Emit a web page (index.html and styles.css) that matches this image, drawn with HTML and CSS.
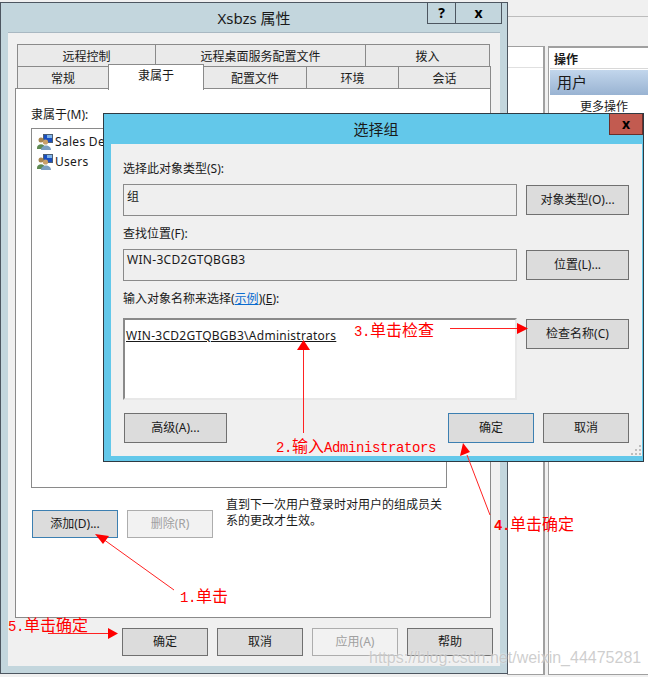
FILE: index.html
```html
<!DOCTYPE html>
<html lang="zh-CN">
<head>
    <meta charset="UTF-8">
    <title>选择组</title>
    <link rel="stylesheet" href="styles.css">
</head>
<body>
    <div class="desktop">
        <!-- 后面的管理控制台 -->
        <div class="mmc">
            <div class="mmc-top"></div>
            <div class="mmc-panes">
                <div class="pane-mid"><div class="pane-mid-head"></div></div>
                <div class="pane-actions">
                    <div class="actions-head">操作</div>
                    <div class="actions-band">用户</div>
                    <div class="actions-item">更多操作</div>
                </div>
            </div>
        </div>

        <!-- 属性窗口 -->
        <div class="window win-props">
            <div class="titlebar props-title">
                <span>Xsbzs 属性</span>
                <div class="props-btns">
                    <div class="cap-btn cap-help">?</div>
                    <div class="cap-btn cap-close">x</div>
                </div>
            </div>
            <div class="client props-client">
                <div class="tabs">
                    <div class="tab-row">
                        <div class="tab w138">远程控制</div>
                        <div class="tab w210">远程桌面服务配置文件</div>
                        <div class="tab w125">拨入</div>
                    </div>
                    <div class="tab-row">
                        <div class="tab w91">常规</div>
                        <div class="tab tab-active w95">隶属于</div>
                        <div class="tab w103">配置文件</div>
                        <div class="tab w92">环境</div>
                        <div class="tab w92">会话</div>
                    </div>
                </div>
                <div class="tab-panel">
                    <div class="panel-label">隶属于(M):</div>
                    <div class="member-list">
                        <div class="member">
                            <svg class="group-icon" viewBox="0 0 16 16"><use href="#group"/></svg>
                            <span>Sales Department</span>
                        </div>
                        <div class="member">
                            <svg class="group-icon" viewBox="0 0 16 16"><use href="#group"/></svg>
                            <span>Users</span>
                        </div>
                    </div>
                    <div class="member-actions">
                        <button class="btn btn-focus w86">添加(D)...</button>
                        <button class="btn btn-off w86">删除(R)</button>
                        <p class="member-note">直到下一次用户登录时对用户的组成员关系的更改才生效。</p>
                    </div>
                </div>
                <div class="props-footer">
                    <button class="btn w86">确定</button>
                    <button class="btn w86">取消</button>
                    <button class="btn btn-off w86">应用(A)</button>
                    <button class="btn w86">帮助</button>
                </div>
            </div>
        </div>

        <!-- 选择组对话框 -->
        <div class="window win-select">
            <div class="titlebar select-title">
                <span>选择组</span>
                <div class="cap-btn select-close">x</div>
            </div>
            <div class="client select-client">
                <div class="field-label">选择此对象类型(S):</div>
                <div class="field-row">
                    <div class="field field-cjk">组</div>
                    <button class="btn w103">对象类型(O)...</button>
                </div>
                <div class="field-label">查找位置(F):</div>
                <div class="field-row">
                    <div class="field">WIN-3CD2GTQBGB3</div>
                    <button class="btn w103">位置(L)...</button>
                </div>
                <div class="field-label field-label-names">输入对象名称来选择(<a href="#">示例</a>)(<u>E</u>):</div>
                <div class="field-row names-row">
                    <div class="names-box"><u>WIN-3CD2GTQBGB3\Administrators</u></div>
                    <button class="btn w103">检查名称(C)</button>
                </div>
                <div class="select-footer">
                    <button class="btn w103">高级(A)...</button>
                    <div class="select-footer-right">
                        <button class="btn btn-focus w86">确定</button>
                        <button class="btn w86">取消</button>
                    </div>
                </div>
                <svg class="grip" viewBox="0 0 10 10">
                    <rect x="8" y="0" width="2" height="2"/><rect x="4" y="4" width="2" height="2"/>
                    <rect x="8" y="4" width="2" height="2"/><rect x="0" y="8" width="2" height="2"/>
                    <rect x="4" y="8" width="2" height="2"/><rect x="8" y="8" width="2" height="2"/>
                </svg>
            </div>
        </div>

        <!-- 红色标注 -->
        <svg class="arrows" viewBox="0 0 648 677">
            <g stroke="#f22" stroke-width="1" fill="none">
                <path d="M174 590 L103 539"/>
                <path d="M303.5 433 L303.5 350"/>
                <path d="M450 328.5 L518 328.5"/>
                <path d="M490 515 L467 455"/>
                <path d="M48 633.5 L108 633.5"/>
            </g>
            <g fill="#f00">
                <polygon points="95,534 109,536 103,544"/>
                <polygon points="303.5,340 297,350 310,350"/>
                <polygon points="528,328.5 517,323 517,334"/>
                <polygon points="463,443 460,456 470,452"/>
                <polygon points="118,633.5 108,628 108,639"/>
            </g>
        </svg>
        <div class="note note-1"><span class="mono">1.</span>单击</div>
        <div class="note note-2"><span class="mono">2.</span>输入<span class="mono">Administrators</span></div>
        <div class="note note-3"><span class="mono">3.</span>单击检查</div>
        <div class="note note-4"><span class="mono mono-bold">4.</span>单击确定</div>
        <div class="note note-5"><span class="mono">5.</span>单击确定</div>
        <div class="watermark">https://blog.csdn.net/weixin_44475281</div>

        <svg class="defs" width="0" height="0">
            <symbol id="group" viewBox="0 0 16 16">
                <rect x="6" y="0" width="10" height="9" fill="#4d5f74"/>
                <rect x="7" y="1" width="8" height="7" fill="#1a4fc0"/>
                <rect x="10" y="1" width="5" height="3" fill="#7fb2e8"/>
                <circle cx="4" cy="6" r="2.5" fill="#a88650"/>
                <path d="M0 14 C0 9 8 9 8 14 L8 15 L0 15 Z" fill="#5f8a52"/>
                <circle cx="8.5" cy="8" r="2.6" fill="#c9a068"/>
                <path d="M4 16 C4 10 14 10 14 16 Z" fill="#7b9fc0"/>
            </symbol>
        </svg>
    </div>
</body>
</html>
```

FILE: styles.css
```css
* {
    box-sizing: border-box;
}
body {
    margin: 0;
    font-family: "Noto Sans", "Noto Sans CJK SC", sans-serif;
    font-size: 12px;
    line-height: 16px;
    color: #1a1a1a;
}
.desktop {
    position: relative;
    width: 648px;
    height: 677px;
    overflow: hidden;
    background: #f0f0f0;
}

/* 后面的控制台 */
.mmc {
    position: absolute;
    left: 507px;
    top: 0;
    width: 141px;
    height: 677px;
    display: flex;
    flex-direction: column;
}
.mmc-top {
    flex: none;
    height: 30px;
    margin-top: 16px;
    border-top: 1px solid #bcbcbc;
}
.mmc-panes {
    flex: 1;
    display: flex;
    gap: 3px;
    padding-bottom: 2px;
}
.pane-mid {
    width: 38px;
    background: #fff;
    border-top: 1px solid #a0a0a0;
    border-right: 2px solid #a0a0a0;
    border-bottom: 1px solid #a0a0a0;
}
.pane-mid-head {
    height: 21px;
    border-bottom: 1px solid #e0e0e0;
}
.pane-actions {
    flex: 1;
    background: #fff;
    border: 1px solid #a0a0a0;
    border-top-width: 2px;
    border-right: none;
    padding-left: 1px;
}
.actions-head {
    height: 21px;
    padding: 4px 0 0 4px;
    font-weight: bold;
    border-bottom: 1px solid #d8d8d8;
}
.actions-band {
    height: 25px;
    margin-top: 1px;
    padding: 3px 0 0 7px;
    font-size: 15px;
    line-height: 18px;
    background: linear-gradient(#c2d6ec, #99b3d2);
}
.actions-item {
    padding: 4px 0 0 30px;
}

/* 窗口 */
.window {
    position: absolute;
    display: flex;
    flex-direction: column;
    border: 1px solid #4d5660;
}
.titlebar {
    position: relative;
    display: flex;
    justify-content: center;
    align-items: center;
    flex: none;
    font-size: 15px;
}
.client {
    background: #f0f0f0;
    flex: 1;
}
.cap-btn {
    display: flex;
    justify-content: center;
    align-items: center;
    font-weight: bold;
    font-size: 14px;
    line-height: 1;
    color: #000;
    border: 1px solid #4d5660;
}

/* 属性窗口 */
.win-props {
    left: 0;
    top: 2px;
    width: 508px;
    height: 672px;
    background: #c3d6dd;
}
.props-title {
    height: 29px;
}
.props-btns {
    position: absolute;
    top: -1px;
    right: 5px;
    display: flex;
}
.cap-help {
    width: 29px;
    height: 22px;
}
.cap-close {
    width: 47px;
    height: 22px;
    margin-left: -1px;
}
.props-client {
    margin: 0 7px 7px 7px;
    padding: 11px 9px 0 7px;
    border-top: 1px solid #a9b8c2;
}
.tabs {
    padding-left: 2px;
}
.tab-row {
    display: flex;
    height: 22px;
}
.tab {
    display: flex;
    justify-content: center;
    align-items: center;
    padding-top: 2px;
    background: #eaeaea;
    border: 1px solid #8a8a8a;
    border-bottom: none;
    margin-right: -1px;
}
.tab-active {
    position: relative;
    z-index: 2;
    height: 26px;
    margin-top: -2px;
    padding-top: 0;
    padding-bottom: 3px;
    background: #fff;
}
.tab-panel {
    position: relative;
    height: 530px;
    padding: 18px 15px 0 15px;
    background: #fff;
    border: 1px solid #8a8a8a;
}
.panel-label {
    height: 21px;
}
.member-list {
    width: 416px;
    height: 360px;
    padding: 3px 5px;
    border: 1px solid #8a8a8a;
}
.member {
    display: flex;
    align-items: center;
    gap: 2px;
    height: 20px;
    letter-spacing: 0.3px;
}
.group-icon {
    width: 16px;
    height: 16px;
    flex: none;
}
.member-actions {
    display: flex;
    gap: 9px;
    margin: 22px 0 0 1px;
    height: 28px;
}
.member-note {
    width: 225px;
    margin: -13px 0 0 4px;
}
.props-footer {
    display: flex;
    justify-content: flex-end;
    gap: 9px;
    margin: 10px -2px 0 0;
}

/* 按钮 */
.btn {
    height: 28px;
    padding: 0;
    font: inherit;
    color: inherit;
    background: #dcdcdc;
    border: 1px solid #707070;
    flex: none;
}
.btn-focus {
    border-color: #3c7fb1;
}
.btn-off {
    color: #a0a0a0;
    background: #f2f2f2;
    border-color: #adadad;
}
.w86 { width: 86px; }
.w103 { width: 103px; }
.w138 { width: 139px; }
.w210 { width: 211px; }
.w125 { width: 125px; }
.w91 { width: 92px; }
.w95 { width: 96px; }
.w92 { width: 93px; }
.w103.tab { width: 104px; }

/* 选择组 */
.win-select {
    left: 103px;
    top: 113px;
    width: 541px;
    height: 349px;
    background: #63c8ea;
    border-color: #2f3a42;
}
.select-title {
    height: 30px;
    padding-left: 5px;
}
.select-close {
    position: absolute;
    top: 0;
    right: 0;
    width: 34px;
    height: 21px;
    background: #c25b50;
    border-color: #6a2f2a;
    border-top: none;
}
.select-client {
    position: relative;
    margin: 0 1px 5px 7px;
    padding: 16px 0 0 12px;
}
.field-label {
    height: 24px;
    padding-top: 1px;
}
.field-row {
    display: flex;
    gap: 9px;
    height: 32px;
    margin-bottom: 9px;
}
.field-row .btn {
    margin-top: 1px;
    height: 30px;
}
.field {
    width: 394px;
    padding: 2px 0 0 3px;
    background: #efefef;
    border: 1px solid #8a8a8a;
    letter-spacing: 0.3px;
}
.field-cjk {
    padding-top: 4px;
}
.field-label-names {
    height: 28px;
}
.field-label-names a {
    color: #0a6ccf;
}
.names-row {
    height: 82px;
    margin-bottom: 13px;
}
.names-box {
    width: 394px;
    padding: 8px 0 0 1px;
    background: #fff;
    border: 2px solid #e8e8e8;
    border-top-color: #8a8a8a;
    border-left-color: #8a8a8a;
    letter-spacing: 0.27px;
}
.select-footer {
    display: flex;
    justify-content: space-between;
    padding-left: 1px;
    width: 506px;
}
.select-footer .btn {
    height: 30px;
}
.select-footer-right {
    display: flex;
    gap: 9px;
}
.grip {
    position: absolute;
    right: 1px;
    bottom: 1px;
    width: 10px;
    height: 10px;
    fill: #bdbdbd;
}

/* 标注 */
.arrows {
    position: absolute;
    left: 0;
    top: 0;
    width: 648px;
    height: 677px;
    pointer-events: none;
}
.note {
    position: absolute;
    font-family: "Noto Sans CJK SC", sans-serif;
    font-size: 16px;
    line-height: 20px;
    color: #f00;
    white-space: nowrap;
}
.mono {
    font-family: "Liberation Mono", monospace;
    font-size: 14px;
    letter-spacing: -0.4px;
}
.mono-bold {
    font-weight: bold;
}
.note-1 { left: 180px; top: 585px; }
.note-2 { left: 276px; top: 435px; }
.note-3 { left: 354px; top: 319px; }
.note-4 { left: 494px; top: 513px; }
.note-5 { left: 8px; top: 614px; }
.watermark {
    position: absolute;
    left: 369px;
    top: 647px;
    font-family: "Liberation Sans", sans-serif;
    font-size: 16px;
    line-height: 22px;
    color: rgba(190, 190, 190, 0.75);
    white-space: nowrap;
    text-shadow: 0 0 2px rgba(255, 255, 255, 0.8);
}
.defs {
    position: absolute;
}
```
